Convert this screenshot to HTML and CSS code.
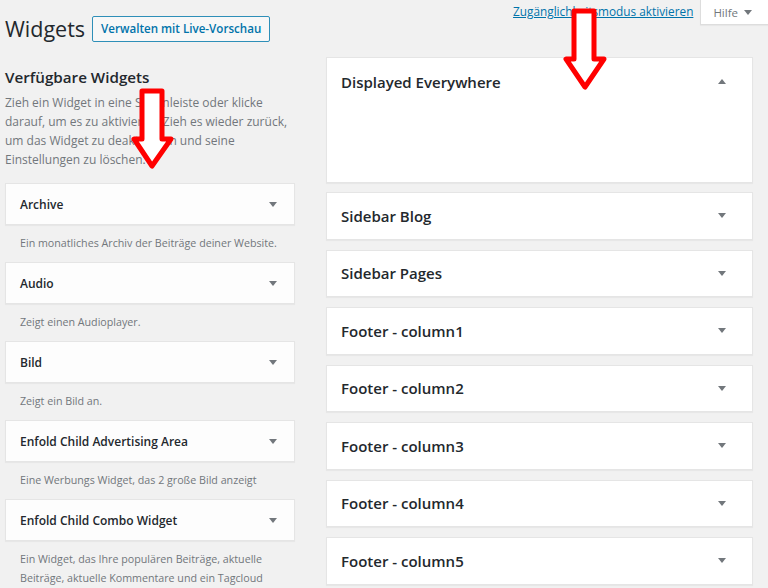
FILE: index.html
```html
<!DOCTYPE html>
<html lang="de">
<head>
    <meta charset="UTF-8">
    <meta name="viewport" content="width=device-width, initial-scale=1.0">
    <title>Widgets</title>
    <link rel="stylesheet" href="styles.css">
</head>
<body>
    <div class="wrap">
        <!-- Header: title + screen options -->
        <div class="header">
            <div class="title-row">
                <h1>Widgets</h1>
                <a href="#" class="page-action">Verwalten mit Live-Vorschau</a>
            </div>
            <div class="screen-meta">
                <a href="#" class="a11y-link">Zugänglichkeitsmodus aktivieren</a>
                <span class="help-tab">Hilfe <span class="caret"></span></span>
            </div>
        </div>

        <div class="columns">
            <!-- Available widgets -->
            <div class="available">
                <h2>Verfügbare Widgets</h2>
                <p class="intro">Zieh ein Widget in eine Seitenleiste oder klicke darauf, um es zu aktivieren. Zieh es wieder zurück, um das Widget zu deaktivieren und seine Einstellungen zu löschen.</p>

                <div class="widget">
                    <div class="widget-top"><span>Archive</span><span class="caret"></span></div>
                    <p class="widget-desc">Ein monatliches Archiv der Beiträge deiner Website.</p>
                </div>
                <div class="widget">
                    <div class="widget-top"><span>Audio</span><span class="caret"></span></div>
                    <p class="widget-desc">Zeigt einen Audioplayer.</p>
                </div>
                <div class="widget">
                    <div class="widget-top"><span>Bild</span><span class="caret"></span></div>
                    <p class="widget-desc">Zeigt ein Bild an.</p>
                </div>
                <div class="widget">
                    <div class="widget-top"><span>Enfold Child Advertising Area</span><span class="caret"></span></div>
                    <p class="widget-desc">Eine Werbungs Widget, das 2 große Bild anzeigt</p>
                </div>
                <div class="widget">
                    <div class="widget-top"><span>Enfold Child Combo Widget</span><span class="caret"></span></div>
                    <p class="widget-desc">Ein Widget, das Ihre populären Beiträge, aktuelle Beiträge, aktuelle Kommentare und ein Tagcloud</p>
                </div>
            </div>

            <!-- Sidebars -->
            <div class="sidebars">
                <div class="sidebar open">
                    <div class="sidebar-name"><h3>Displayed Everywhere</h3><span class="caret up"></span></div>
                </div>
                <div class="sidebar">
                    <div class="sidebar-name"><h3>Sidebar Blog</h3><span class="caret"></span></div>
                </div>
                <div class="sidebar">
                    <div class="sidebar-name"><h3>Sidebar Pages</h3><span class="caret"></span></div>
                </div>
                <div class="sidebar">
                    <div class="sidebar-name"><h3>Footer - column1</h3><span class="caret"></span></div>
                </div>
                <div class="sidebar">
                    <div class="sidebar-name"><h3>Footer - column2</h3><span class="caret"></span></div>
                </div>
                <div class="sidebar">
                    <div class="sidebar-name"><h3>Footer - column3</h3><span class="caret"></span></div>
                </div>
                <div class="sidebar">
                    <div class="sidebar-name"><h3>Footer - column4</h3><span class="caret"></span></div>
                </div>
                <div class="sidebar">
                    <div class="sidebar-name"><h3>Footer - column5</h3><span class="caret"></span></div>
                </div>
            </div>
        </div>
    </div>

    <!-- Red annotation arrows drawn over the screenshot -->
    <svg class="mark mark-left" width="52" height="90" viewBox="0 0 52 90">
        <path d="M14 5 H34 V53 H43 L24 80 L6 53 H14 Z" fill="#fff" stroke="#f00" stroke-width="5" stroke-linejoin="round"/>
    </svg>
    <svg class="mark mark-right" width="52" height="90" viewBox="0 0 52 90">
        <path d="M14 5 H34 V53 H44 L25 81 L6 53 H14 Z" fill="#fff" stroke="#f00" stroke-width="5" stroke-linejoin="round"/>
    </svg>
</body>
</html>
```

FILE: styles.css
```css
body {
    margin: 0;
    background-color: #f1f1f1;
    font-family: "Open Sans", "Noto Sans", Arial, sans-serif;
    color: #444;
    overflow: hidden;
}
.wrap {
    padding: 0 15px 0 5px;
}
.header {
    display: flex;
    justify-content: space-between;
    align-items: flex-start;
    margin-right: -15px;
}
.title-row {
    display: flex;
    align-items: center;
    padding-top: 16px;
}
.title-row h1 {
    margin: 0 7px 0 0;
    font-size: 21.5px;
    font-weight: 400;
    color: #23282d;
    line-height: 26px;
}
.page-action {
    display: inline-block;
    border: 1px solid #2e8fb8;
    border-radius: 2px;
    background-color: #f7f7f7;
    color: #0073aa;
    font-size: 11.6px;
    font-weight: 600;
    line-height: 24px;
    padding: 0 8px;
    text-decoration: none;
}
.screen-meta {
    display: flex;
    align-items: flex-start;
}
.a11y-link {
    color: #0073aa;
    font-size: 11.8px;
    line-height: 22px;
    margin-right: 7px;
}
.help-tab {
    display: flex;
    align-items: center;
    height: 24px;
    padding: 0 16px 0 12px;
    background-color: #fff;
    border: 1px solid #ddd;
    border-top: none;
    border-right: none;
    box-shadow: 0 1px 1px rgba(0, 0, 0, 0.04);
    color: #72777c;
    font-size: 11.5px;
}
.help-tab .caret {
    margin-left: 6px;
}
.caret {
    width: 0;
    height: 0;
    border-left: 4px solid transparent;
    border-right: 4px solid transparent;
    border-top: 5px solid #72777c;
}
.caret.up {
    border-top: none;
    border-bottom: 5px solid #72777c;
}
.columns {
    display: flex;
    justify-content: space-between;
    margin-top: 15px;
}
.available {
    width: 290px;
}
.available h2 {
    margin: 9px 0 0;
    font-size: 15.2px;
    font-weight: 600;
    color: #23282d;
    line-height: 22px;
}
.intro {
    margin: 5px 0 14px;
    font-size: 12px;
    line-height: 19px;
    color: #72777c;
}
.widget-top {
    display: flex;
    justify-content: space-between;
    align-items: center;
    height: 40px;
    padding: 0 17px 0 14px;
    background-color: #fdfdfd;
    border: 1px solid #e5e5e5;
    box-shadow: 0 1px 1px rgba(0, 0, 0, 0.04);
    font-size: 12px;
    font-weight: 600;
    color: #23282d;
}
.widget-desc {
    margin: 0;
    padding: 9px 15px 9px;
    font-size: 10.7px;
    line-height: 19px;
    color: #72777c;
}
.sidebars {
    width: 427px;
}
.sidebar {
    background-color: #fff;
    border: 1px solid #e5e5e5;
    box-shadow: 0 1px 1px rgba(0, 0, 0, 0.04);
    margin-bottom: 10px;
}
.sidebar.open {
    height: 124px;
    margin-bottom: 9px;
}
.sidebar-name {
    display: flex;
    justify-content: space-between;
    align-items: center;
    height: 45.5px;
    padding: 0 26px 0 14px;
}
.sidebar.open .sidebar-name {
    height: 47px;
}
.sidebar-name h3 {
    margin: 0;
    font-size: 15px;
    font-weight: 600;
    color: #23282d;
}
.mark {
    position: absolute;
}
.mark-left {
    top: 86px;
    left: 128px;
}
.mark-right {
    top: 6px;
    left: 560px;
}
```
